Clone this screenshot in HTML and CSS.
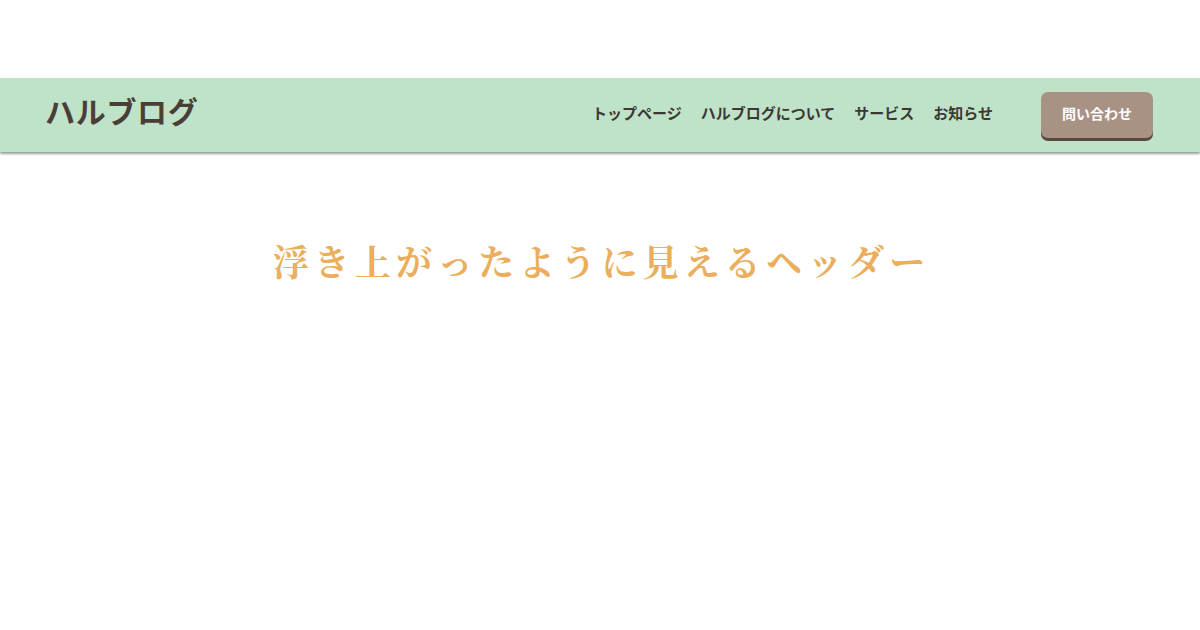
FILE: index.html
```html
<!DOCTYPE html>
<html lang="ja">
<head>
<meta charset="utf-8">
<title>ハルブログ</title>
<link rel="stylesheet" href="styles.css">
</head>
<body>
<header class="site-header">
  <div class="logo">ハルブログ</div>
  <nav class="nav">
    <a class="nav-item" href="#">トップページ</a>
    <a class="nav-item" href="#">ハルブログについて</a>
    <a class="nav-item" href="#">サービス</a>
    <a class="nav-item" href="#">お知らせ</a>
  </nav>
  <a class="contact" href="#">問い合わせ</a>
</header>
<main class="main">
  <h1 class="title">浮き上がったように見えるヘッダー</h1>
</main>
</body>
</html>
```
FILE: styles.css
```css
html, body {
  margin: 0;
  padding: 0;
  background: #ffffff;
  font-family: "Noto Sans CJK JP", "Noto Sans", sans-serif;
}
.site-header {
  margin-top: 78px;
  height: 74px;
  background: #bfe3c8;
  display: flex;
  align-items: center;
  padding: 0 47px;
  box-shadow: 0 2px 2px rgba(60, 90, 65, 0.55);
}
.logo {
  font-size: 30px;
  font-weight: 700;
  color: #4a3f38;
  letter-spacing: 0.7px;
  margin-top: -10px;
  margin-left: -2px;
}
.nav {
  margin-left: auto;
  display: flex;
  gap: 19px;
  margin-top: -6px;
}
.nav-item {
  font-size: 15px;
  font-weight: 700;
  color: #3d3834;
  text-decoration: none;
}
.contact {
  margin-left: 48px;
  width: 112px;
  height: 46px;
  box-sizing: border-box;
  padding-bottom: 4px;
  display: flex;
  align-items: center;
  justify-content: center;
  background: #a89284;
  color: #ffffff;
  font-size: 14px;
  font-weight: 700;
  text-decoration: none;
  border-radius: 7px;
  box-shadow: 0 3px 0 #5b4a40;
}
.main {
  display: flex;
  justify-content: center;
  padding-top: 87px;
}
.title {
  margin: 0;
  padding-left: 3px;
  font-family: "Noto Serif CJK JP", "Noto Sans CJK JP", serif;
  font-size: 36px;
  font-weight: 700;
  color: #eaae5c;
  letter-spacing: 5.1px;
  line-height: 1.2;
}
```
